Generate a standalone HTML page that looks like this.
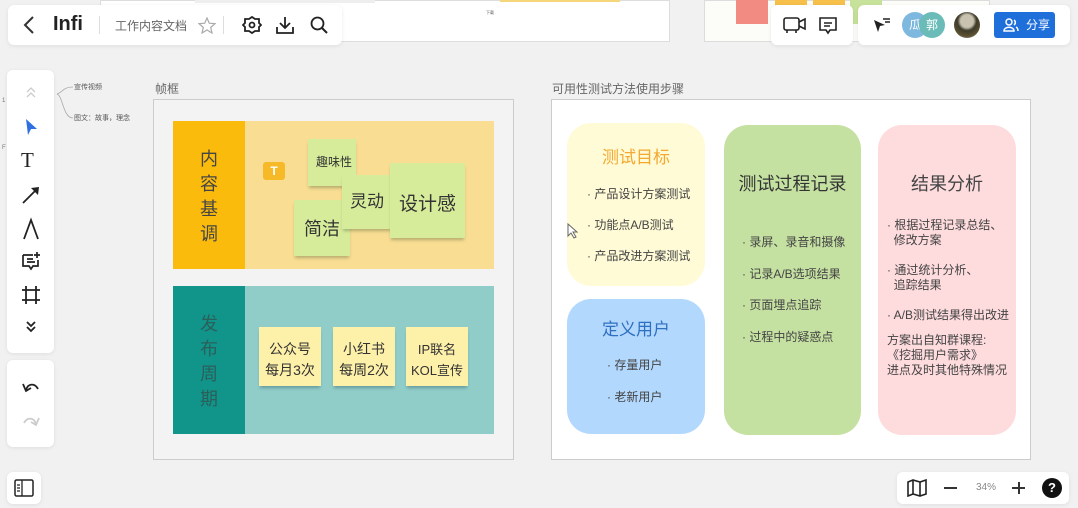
<!DOCTYPE html>
<html><head><meta charset="utf-8"><style>
*{margin:0;padding:0;box-sizing:border-box}
body{width:1078px;height:508px;overflow:hidden;background:#f1f1f1;font-family:"Liberation Sans","Noto Sans CJK SC",sans-serif;position:relative;color:#333}
.a{position:absolute}
.panel{position:absolute;background:#fff;border-radius:6px;box-shadow:0 1px 4px rgba(0,0,0,.08)}
.st{position:absolute;background:#d7ec9b;box-shadow:0 3px 3px -1px rgba(60,80,40,.35);color:#333;text-align:center}
.sy{position:absolute;background:#fdf0a8;box-shadow:0 3px 3px -1px rgba(40,80,100,.4);color:#333;text-align:center;font-size:14px;line-height:21px;padding-top:12px}
.card{position:absolute;border-radius:24px;text-align:center}
.li{font-size:12px;color:#444;text-align:left}
svg{position:absolute}
</style></head><body>
<div class="a" style="left:100px;top:0;width:570px;height:42px;background:#fff;border:1px solid #ddd"></div>
<div class="a" style="left:195px;top:0;width:180px;height:3px;background:#eee"></div>
<div class="a" style="left:500px;top:0;width:120px;height:2px;background:#f5d67a"></div>
<div class="a" style="left:486px;top:10px;font-size:4px;color:#555">下载</div>
<div class="a" style="left:704px;top:0;width:286px;height:42px;background:#fcfcf8;border:1px solid #ddd"></div>
<div class="a" style="left:736px;top:0;width:32px;height:24px;background:#f28b82"></div>
<div class="a" style="left:775px;top:0;width:32px;height:6px;background:#f6c04a"></div>
<div class="a" style="left:813px;top:0;width:32px;height:6px;background:#f6c04a"></div>
<div class="a" style="left:850px;top:0;width:32px;height:24px;background:#c7e29a"></div>

<div class="panel" style="left:8px;top:5px;width:334px;height:40px"></div>
<svg style="left:22px;top:15px" width="14" height="20"><path d="M11 2 L3 10 L11 18" fill="none" stroke="#333" stroke-width="2"/></svg>
<div class="a" style="left:53px;top:13px;font-size:20px;font-weight:bold;color:#222">Infi</div>
<div class="a" style="left:99px;top:16px;width:1px;height:18px;background:#ddd"></div>
<div class="a" style="left:115px;top:17px;font-size:12px;color:#666">工作内容文档</div>
<svg style="left:198px;top:17px" width="18" height="17"><path d="M9 1 L11.3 6.2 L17 6.7 L12.7 10.4 L14 16 L9 13 L4 16 L5.3 10.4 L1 6.7 L6.7 6.2 Z" fill="none" stroke="#aaa" stroke-width="1.2"/></svg>
<div class="a" style="left:223px;top:16px;width:1px;height:18px;background:#ddd"></div>
<svg style="left:242px;top:15px" width="20" height="20"><path d="M10 2 L13 4 L17 4 L17 8 L19 10 L17 12 L17 16 L13 16 L10 18 L7 16 L3 16 L3 12 L1 10 L3 8 L3 4 L7 4 Z" fill="none" stroke="#222" stroke-width="1.8"/><circle cx="10" cy="10" r="2.5" fill="none" stroke="#222" stroke-width="1.8"/></svg>
<svg style="left:275px;top:15px" width="20" height="20"><path d="M10 2 V13 M5 8 L10 13 L15 8 M2 12 V18 H18 V12" fill="none" stroke="#222" stroke-width="1.8"/></svg>
<svg style="left:309px;top:15px" width="20" height="20"><circle cx="8.5" cy="8.5" r="6" fill="none" stroke="#222" stroke-width="1.8"/><path d="M13 13 L18 18" stroke="#222" stroke-width="2"/></svg>

<div class="panel" style="left:771px;top:5px;width:82px;height:40px"></div>
<svg style="left:783px;top:16px" width="24" height="18"><rect x="1" y="2" width="15" height="12" rx="2" fill="none" stroke="#222" stroke-width="1.6"/><path d="M16 6 L22 3 V13 L16 10" fill="none" stroke="#222" stroke-width="1.6"/><path d="M4 14 V17 M13 14 V17" stroke="#222" stroke-width="1.6"/></svg>
<svg style="left:818px;top:16px" width="20" height="20"><path d="M2 2 H18 V14 H12 L10 17 L8 14 H2 Z" fill="none" stroke="#222" stroke-width="1.6"/><path d="M6 7 H14 M6 10 H12" stroke="#222" stroke-width="1.6"/></svg>
<div class="panel" style="left:858px;top:5px;width:212px;height:40px"></div>
<svg style="left:872px;top:16px" width="20" height="18"><path d="M2 4 L13 9 L8 10 L6 16 Z" fill="#222"/><path d="M11 3 H18 M13 6 H18" stroke="#222" stroke-width="1.5"/></svg>
<div class="a" style="left:902px;top:12px;width:26px;height:26px;border-radius:50%;background:#7eb8de;color:#fff;font-size:12px;text-align:center;line-height:26px">瓜</div>
<div class="a" style="left:919px;top:12px;width:26px;height:26px;border-radius:50%;background:#6bbcb8;color:#fff;font-size:12px;text-align:center;line-height:26px">郭</div>
<div class="a" style="left:954px;top:12px;width:26px;height:26px;border-radius:50%;background:radial-gradient(circle at 50% 35%,#c9c2b0 0 30%,#3d3a2a 45%,#5a5030 70%,#aaa 100%)"></div>
<div class="a" style="left:994px;top:12px;width:61px;height:26px;border-radius:3px;background:#1f6fdb;color:#fff;font-size:12px;line-height:26px;padding-left:32px">分享</div>
<svg style="left:1003px;top:17px" width="16" height="16"><circle cx="6" cy="5" r="3" fill="none" stroke="#fff" stroke-width="1.5"/><path d="M1 14 C1 9 11 9 11 14 Z" fill="none" stroke="#fff" stroke-width="1.5"/><path d="M11 3 A3 3 0 0 1 11 8 M13 10 C15 11 15 13 15 14" fill="none" stroke="#fff" stroke-width="1.5"/></svg>

<div class="panel" style="left:7px;top:70px;width:47px;height:283px"></div>
<svg style="left:24px;top:86px" width="14" height="14"><path d="M3 6 L7 2 L11 6 M3 11 L7 7 L11 11" fill="none" stroke="#ccc" stroke-width="1.3"/></svg>
<svg style="left:23px;top:118px" width="16" height="18"><path d="M3 1 L14 11 L8 11 L5 17 Z" fill="#2f6fe0"/></svg>
<div class="a" style="left:21px;top:148px;font-size:21px;color:#222;font-family:'Liberation Serif',serif">T</div>
<svg style="left:21px;top:185px" width="20" height="20"><path d="M2 18 L16 4" stroke="#222" stroke-width="1.8"/><path d="M10 3 L18 2 L17 10 Z" fill="#222"/></svg>
<svg style="left:21px;top:217px" width="20" height="24"><path d="M3 22 L10 3 L17 22" fill="none" stroke="#222" stroke-width="1.8"/></svg>
<svg style="left:21px;top:251px" width="20" height="20"><path d="M2 4 H12 M2 4 V15 H8 L10 18 L12 15 H17 V9" fill="none" stroke="#222" stroke-width="1.7"/><path d="M6 8 H12 M6 11 H14 M16 1 V7 M13 4 H19" stroke="#222" stroke-width="1.7"/></svg>
<svg style="left:21px;top:285px" width="20" height="20"><path d="M5 1 V19 M15 1 V19 M1 5 H19 M1 15 H19" stroke="#222" stroke-width="1.8"/></svg>
<svg style="left:24px;top:320px" width="14" height="14"><path d="M3 2 L7 6 L11 2 M3 7 L7 11 L11 7" fill="none" stroke="#222" stroke-width="1.8"/></svg>
<div class="panel" style="left:7px;top:360px;width:47px;height:87px"></div>
<svg style="left:22px;top:380px" width="18" height="14"><path d="M4 10 C6 3 13 3 16 9" fill="none" stroke="#222" stroke-width="1.8"/><path d="M1 4 L4 11 L9 8" fill="none" stroke="#222" stroke-width="1.8"/></svg>
<svg style="left:22px;top:414px" width="18" height="14"><path d="M14 10 C12 3 5 3 2 9" fill="none" stroke="#ccc" stroke-width="1.8"/><path d="M17 4 L14 11 L9 8" fill="none" stroke="#ccc" stroke-width="1.8"/></svg>
<div class="panel" style="left:7px;top:472px;width:34px;height:32px"></div>
<svg style="left:14px;top:479px" width="20" height="18"><rect x="1" y="1" width="18" height="16" rx="1.5" fill="none" stroke="#222" stroke-width="1.5"/><path d="M8 1 V17 M3 6 H6 M3 9 H6 M3 12 H6" stroke="#222" stroke-width="1.3"/></svg>

<svg style="left:55px;top:80px" width="20" height="45"><path d="M18 7 C8 7 8 12 2 14 M2 14 C8 16 8 38 18 38" fill="none" stroke="#aaa" stroke-width="0.8"/></svg>
<div class="a" style="left:74px;top:82px;font-size:7px;color:#555">宣传视频</div>
<div class="a" style="left:74px;top:113px;font-size:7px;color:#555">图文：故事，理念</div>
<div class="a" style="left:2px;top:98px;font-size:6px;color:#777">1</div>
<div class="a" style="left:2px;top:145px;font-size:6px;color:#777">F</div>

<div class="a" style="left:155px;top:80px;font-size:12px;color:#666">帧框</div>
<div class="a" style="left:153px;top:99px;width:361px;height:361px;border:1px solid #ccc;background:#f3f3f3"></div>
<div class="a" style="left:173px;top:121px;width:321px;height:148px;background:#f8dd92"></div>
<div class="a" style="left:173px;top:121px;width:72px;height:148px;background:#fbbb0c;color:#444;font-size:18px;line-height:25px;text-align:center;padding-top:26px">内<br>容<br>基<br>调</div>
<div class="a" style="left:263px;top:162px;width:22px;height:18px;background:#f6b928;border-radius:3px;color:#fff;font-size:12px;text-align:center;line-height:18px;font-weight:bold">T</div>
<div class="st" style="left:308px;top:139px;width:48px;height:47px;font-size:12px;padding-top:14px;text-align:left;padding-left:8px">趣味性</div>
<div class="st" style="left:294px;top:200px;width:56px;height:56px;font-size:18px;padding-top:15px">简洁</div>
<div class="st" style="left:342px;top:175px;width:50px;height:54px;font-size:17px;padding-top:12px">灵动</div>
<div class="st" style="left:390px;top:163px;width:75px;height:75px;font-size:19px;padding-top:26px">设计感</div>
<div class="a" style="left:173px;top:286px;width:321px;height:148px;background:#91cdc8"></div>
<div class="a" style="left:173px;top:286px;width:72px;height:148px;background:#11958a;color:#2a5f5a;font-size:18px;line-height:25px;text-align:center;padding-top:26px">发<br>布<br>周<br>期</div>
<div class="sy" style="left:259px;top:327px;width:62px;height:59px">公众号<br>每月3次</div>
<div class="sy" style="left:333px;top:327px;width:62px;height:59px">小红书<br>每周2次</div>
<div class="sy" style="left:406px;top:327px;width:62px;height:59px;font-size:13px">IP联名<br>KOL宣传</div>

<div class="a" style="left:552px;top:80px;font-size:12px;color:#666">可用性测试方法使用步骤</div>
<div class="a" style="left:551px;top:99px;width:480px;height:361px;border:1px solid #ccc;background:#fff"></div>
<div class="card" style="left:567px;top:123px;width:138px;height:163px;background:#fffbd6">
 <div style="font-size:17px;color:#f4a830;margin-top:20px">测试目标</div>
 <div class="li" style="margin:11px 0 0 20px;line-height:31px">· 产品设计方案测试<br>· 功能点A/B测试<br>· 产品改进方案测试</div></div>
<div class="card" style="left:567px;top:299px;width:138px;height:135px;background:#b3d8fd">
 <div style="font-size:17px;color:#2f6fc0;margin-top:16px">定义用户</div>
 <div class="li" style="margin:9px 0 0 40px;line-height:32px">· 存量用户<br>· 老新用户</div></div>
<div class="card" style="left:724px;top:125px;width:137px;height:310px;background:#c5e1a2">
 <div style="font-size:18px;color:#333;margin-top:45px">测试过程记录</div>
 <div class="li" style="margin:31px 0 0 18px;line-height:31.5px">· 录屏、录音和摄像<br>· 记录A/B选项结果<br>· 页面埋点追踪<br>· 过程中的疑惑点</div></div>
<div class="card" style="left:878px;top:125px;width:138px;height:310px;background:#fedbdd">
 <div style="font-size:18px;color:#444;margin-top:45px">结果分析</div>
 <div class="li" style="margin:22px 0 0 9px;line-height:15px">· 根据过程记录总结、<br>&nbsp;&nbsp;修改方案<div style="height:15px"></div>· 通过统计分析、<br>&nbsp;&nbsp;追踪结果<div style="height:15px"></div>· A/B测试结果得出改进<div style="height:10px"></div>方案出自知群课程:<br>《挖掘用户需求》<br>进点及时其他特殊情况</div></div>
<svg style="left:567px;top:223px" width="12" height="16"><path d="M1 1 L1 13 L4 10 L7 15 L9 14 L6 9 L10 9 Z" fill="#fff" stroke="#666" stroke-width="1"/></svg>

<div class="panel" style="left:897px;top:472px;width:172px;height:32px"></div>
<svg style="left:907px;top:479px" width="20" height="18"><path d="M1 3 L6 1 L13 3 L19 1 V15 L13 17 L6 15 L1 17 Z M6 1 V15 M13 3 V17" fill="none" stroke="#222" stroke-width="1.6"/></svg>
<div class="a" style="left:944px;top:487px;width:13px;height:2px;background:#333"></div>
<div class="a" style="left:976px;top:482px;font-size:10px;color:#888">34%</div>
<div class="a" style="left:1012px;top:487px;width:13px;height:2px;background:#333"></div>
<div class="a" style="left:1017.5px;top:482px;width:2px;height:12px;background:#333"></div>
<div class="a" style="left:1042px;top:478px;width:20px;height:20px;border-radius:50%;background:#111;color:#fff;font-size:13px;font-weight:bold;text-align:center;line-height:20px">?</div>
</body></html>
